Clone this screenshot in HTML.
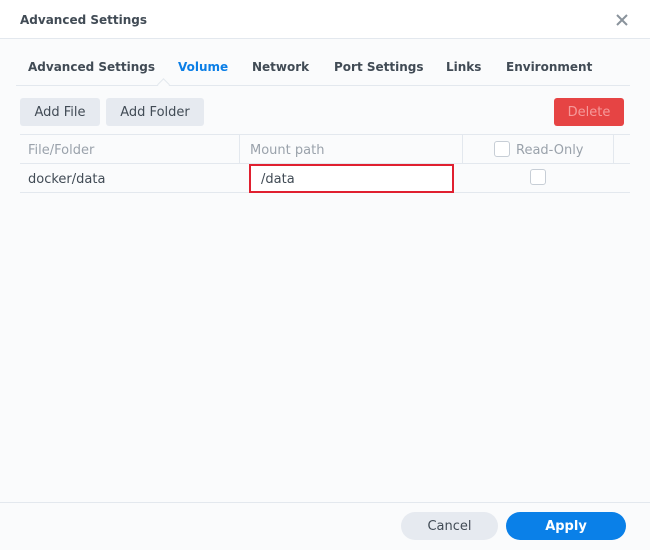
<!DOCTYPE html>
<html><head><style>
*{box-sizing:border-box;margin:0;padding:0}
body{width:650px;height:550px;background:#fafbfc;font-family:"DejaVu Sans","Liberation Sans",sans-serif;position:relative;overflow:hidden;color:#414b55}
.a{position:absolute}
.hdr{left:0;top:0;width:650px;height:39px;background:#fff;border-bottom:1px solid #e3e8ee}
.t{font-weight:bold;font-size:12px;color:#414b55;top:60px}
.btn{border-radius:3px;background:#e6eaf0;font-size:13px;text-align:center;line-height:30px;top:98px;height:28px}
.hl{height:1px;background:#e3e8ee}
.vl{width:1px;background:#e3e8ee}
.th{font-size:13px;color:#9aa2ab;top:143px}
.cb{width:16px;height:16px;border:1px solid #c7ced6;border-radius:3px;background:#fff}
</style></head><body>
<div class="a hdr"></div>
<div class="a" style="left:20px;top:13px;font-size:12px;font-weight:bold">Advanced Settings</div>
<svg class="a" style="left:616px;top:14px" width="12" height="12"><path d="M1 1L11 11M11 1L1 11" stroke="#8a939c" stroke-width="2"/></svg>
<div class="a t" style="left:28px">Advanced Settings</div>
<div class="a t" style="left:178px;color:#0a7ee6">Volume</div>
<div class="a t" style="left:252px">Network</div>
<div class="a t" style="left:334px">Port Settings</div>
<div class="a t" style="left:446px">Links</div>
<div class="a t" style="left:506px">Environment</div>
<div class="a hl" style="left:16px;top:85px;width:614px"></div>
<div class="a" style="left:159px;top:80px;width:9px;height:9px;background:#fafbfc;border-left:1px solid #e3e8ee;border-top:1px solid #e3e8ee;transform:rotate(45deg)"></div>
<div class="a btn" style="left:20px;width:80px">Add File</div>
<div class="a btn" style="left:106px;width:98px">Add Folder</div>
<div class="a btn" style="left:554px;width:70px;background:#e64444;color:#f59a9a">Delete</div>
<div class="a hl" style="left:20px;top:134px;width:610px"></div>
<div class="a hl" style="left:20px;top:163px;width:610px"></div>
<div class="a hl" style="left:20px;top:192px;width:610px"></div>
<div class="a vl" style="left:239px;top:134px;height:29px"></div>
<div class="a vl" style="left:462px;top:134px;height:29px"></div>
<div class="a vl" style="left:613px;top:134px;height:29px"></div>
<div class="a th" style="left:28px">File/Folder</div>
<div class="a th" style="left:250px">Mount path</div>
<div class="a cb" style="left:494px;top:141px"></div>
<div class="a th" style="left:516px">Read-Only</div>
<div class="a" style="left:28px;top:172px;font-size:13px">docker/data</div>
<div class="a" style="left:249px;top:164px;width:205px;height:29px;border:2px solid #e02030;background:#fff"></div>
<div class="a" style="left:261px;top:172px;font-size:13px">/data</div>
<div class="a cb" style="left:530px;top:169px"></div>
<div class="a hl" style="left:0;top:502px;width:650px"></div>
<div class="a" style="left:401px;top:512px;width:97px;height:28px;border-radius:14px;background:#e6eaf0;text-align:center;line-height:30px;font-size:13px">Cancel</div>
<div class="a" style="left:506px;top:512px;width:120px;height:28px;border-radius:14px;background:#0a80e8;color:#fff;text-align:center;line-height:30px;font-size:13px;font-weight:bold">Apply</div>
</body></html>
